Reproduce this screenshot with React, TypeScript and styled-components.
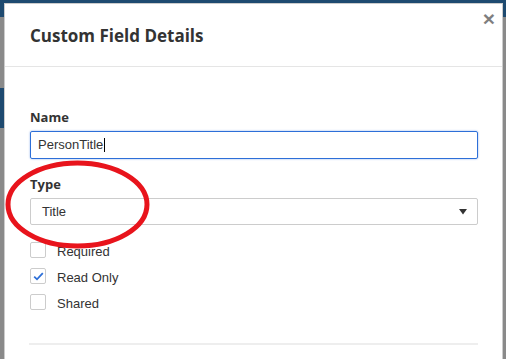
import React from "react";
import styled, { createGlobalStyle } from "styled-components";

const GlobalStyle = createGlobalStyle`
  html, body { margin: 0; padding: 0; }
  body { background: #8a8a8a; font-family: "Liberation Sans", Arial, sans-serif; }
  * { box-sizing: border-box; }
`;

const Backdrop = styled.div`
  position: relative;
  width: 506px;
  height: 359px;
  overflow: hidden;
  padding: 3px 3px 0 4px;
  background:
    linear-gradient(#1e4a70, #1e4a70) 0 0 / 100% 17px no-repeat,
    linear-gradient(#1e4a70, #1e4a70) 0 88px / 4px 40px no-repeat,
    #8a8a8a;
`;

const Modal = styled.div`
  position: relative;
  width: 499px;
  height: 100%;
  background: #fff;
  border: 1px solid rgba(0, 0, 0, 0.2);
  border-bottom: none;
`;

const Header = styled.div`
  height: 63px;
  padding: 22px 25px 0 25px;
  border-bottom: 1px solid #e5e5e5;
`;

const Title = styled.h4`
  margin: 0;
  font-family: "Open Sans", sans-serif;
  font-weight: 700;
  font-size: 17px;
  line-height: 20px;
  color: #333;
`;

const Close = styled.button`
  position: absolute;
  top: 4px;
  right: 7px;
  border: 0;
  background: transparent;
  padding: 0;
  font-family: "Liberation Sans", Arial, sans-serif;
  font-weight: 700;
  font-size: 21px;
  line-height: 21px;
  color: #000;
  opacity: 0.5;
  cursor: pointer;
`;

const Body = styled.div`
  padding: 41px 24px 0 25px;
  display: flex;
  flex-direction: column;
`;

const Group = styled.div<{ $mb?: number }>`
  display: flex;
  flex-direction: column;
  margin-bottom: ${(p) => p.$mb ?? 16}px;
`;

const Label = styled.label`
  font-family: "Open Sans", sans-serif;
  font-weight: 700;
  font-size: 13px;
  line-height: 18px;
  color: #333;
  margin-bottom: 5px;
`;

const Input = styled.div<{ $focused?: boolean }>`
  height: 28px;
  padding: 0 7px;
  border: 1px solid ${(p) => (p.$focused ? "#2d6fd8" : "#cccccc")};
  border-radius: 2px;
  box-shadow: ${(p) => (p.$focused ? "0 0 2px rgba(45,111,216,0.6)" : "none")};
  font-size: 13px;
  line-height: 26px;
  color: #333;
  display: flex;
  align-items: center;
`;

const Caret = styled.span`
  display: inline-block;
  width: 1px;
  height: 14px;
  background: #000;
  margin-left: 1px;
`;

const Select = styled.div`
  height: 27px;
  padding: 0 10px 0 11px;
  border: 1px solid #cccccc;
  border-radius: 2px;
  font-size: 13px;
  line-height: 25px;
  color: #333;
  display: flex;
  align-items: center;
  justify-content: space-between;
`;

const Checks = styled.div`
  display: flex;
  flex-direction: column;
  gap: 10px;
  margin-top: 1px;
`;

const CheckRow = styled.div`
  display: flex;
  align-items: flex-start;
  gap: 11px;
  height: 16px;
`;

const Box = styled.span`
  width: 16px;
  height: 16px;
  border: 1px solid #cccccc;
  border-radius: 2px;
  background: #fff;
  display: flex;
  align-items: center;
  justify-content: center;
  flex: none;
`;

const CheckText = styled.span`
  font-size: 13px;
  line-height: 16px;
  padding-top: 2px;
  color: #333;
`;

const Divider = styled.div`
  height: 2px;
  background: #eeeeee;
  margin-top: 33px;
  margin-left: -1px;
`;

const Annotation = styled.svg`
  position: absolute;
  left: 0;
  top: 0;
  pointer-events: none;
`;

function Check({ label, checked }: { label: string; checked?: boolean }) {
  return (
    <CheckRow>
      <Box>
        {checked && (
          <svg width="11" height="9" viewBox="0 0 11 9">
            <path d="M1.2 4.6 L4 7.3 L9.8 1.2" fill="none" stroke="#2d6fd8" strokeWidth="1.8" />
          </svg>
        )}
      </Box>
      <CheckText>{label}</CheckText>
    </CheckRow>
  );
}

export default function App() {
  return (
    <>
      <GlobalStyle />
      <Backdrop>
        <Modal>
          <Header>
            <Title>Custom Field Details</Title>
          </Header>
          <Close aria-label="close">×</Close>
          <Body>
            <Group>
              <Label>Name</Label>
              <Input $focused>
                PersonTitle
                <Caret />
              </Input>
            </Group>
            <Group>
              <Label>Type</Label>
              <Select>
                <span>Title</span>
                <svg width="8" height="6" viewBox="0 0 8 6">
                  <path d="M0 0 H8 L4 5.5 Z" fill="#333" />
                </svg>
              </Select>
            </Group>
            <Checks>
              <Check label="Required" />
              <Check label="Read Only" checked />
              <Check label="Shared" />
            </Checks>
            <Divider />
          </Body>
        </Modal>
        <Annotation width="506" height="359" viewBox="0 0 506 359">
          <ellipse cx="77.5" cy="204.5" rx="69.5" ry="41.5" fill="none" stroke="#e8141c" strokeWidth="5" />
        </Annotation>
      </Backdrop>
    </>
  );
}
